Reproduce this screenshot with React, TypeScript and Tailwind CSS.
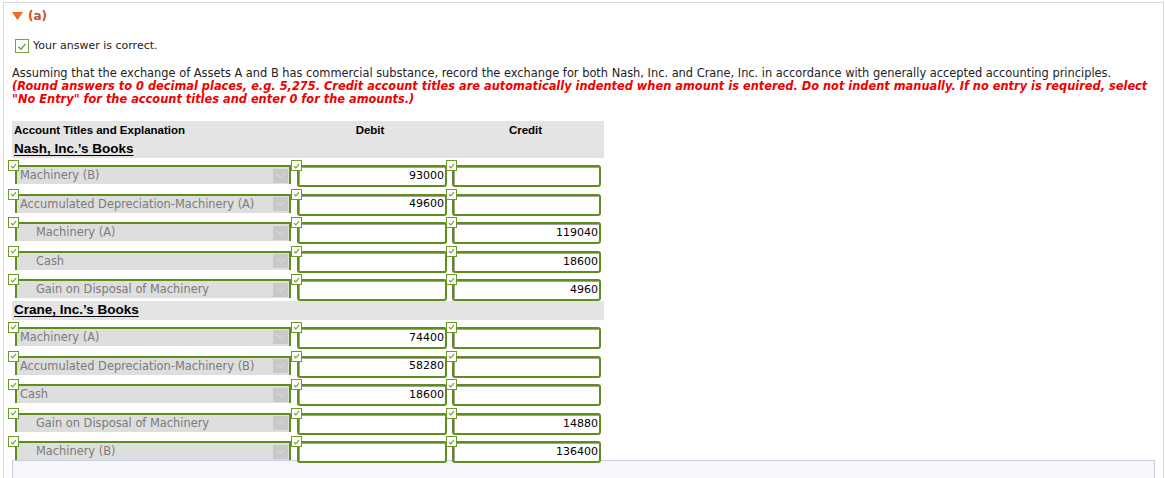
import React from 'react';

type Row = { title: string; indent: boolean; debit: string; credit: string };

const nash: Row[] = [
  { title: 'Machinery (B)', indent: false, debit: '93000', credit: '' },
  { title: 'Accumulated Depreciation-Machinery (A)', indent: false, debit: '49600', credit: '' },
  { title: 'Machinery (A)', indent: true, debit: '', credit: '119040' },
  { title: 'Cash', indent: true, debit: '', credit: '18600' },
  { title: 'Gain on Disposal of Machinery', indent: true, debit: '', credit: '4960' },
];

const crane: Row[] = [
  { title: 'Machinery (A)', indent: false, debit: '74400', credit: '' },
  { title: 'Accumulated Depreciation-Machinery (B)', indent: false, debit: '58280', credit: '' },
  { title: 'Cash', indent: false, debit: '18600', credit: '' },
  { title: 'Gain on Disposal of Machinery', indent: true, debit: '', credit: '14880' },
  { title: 'Machinery (B)', indent: true, debit: '', credit: '136400' },
];

const SmallCheck: React.FC<{ pos: string }> = ({ pos }) => (
  <span
    className={`absolute top-[2px] z-10 flex h-[11px] w-[11px] items-center justify-center border border-[#6b9a2b] bg-white ${pos}`}
  >
    <svg width="7" height="6" viewBox="0 0 7 6">
      <path d="M1 3.2 L2.8 5 L6 1.2" fill="none" stroke="#6b9a2b" strokeWidth="1.1" />
    </svg>
  </span>
);

const Amount: React.FC<{ value: string; width: string }> = ({ value, width }) => (
  <div
    className={`flex h-[22px] items-center justify-end rounded-[3px] border-2 border-[#5f8f1b] bg-white pr-[1px] text-[11px] text-black shadow-[inset_1px_1px_0_#a0a0a0] ${width}`}
  >
    {value}
  </div>
);

const EntryRow: React.FC<{ row: Row }> = ({ row }) => (
  <div className="flex h-[28.6px]">
    <div className="relative w-[281px] pt-[7px]">
      <SmallCheck pos="left-[-4px]" />
      <div className="ml-[3px] flex h-[19px] w-[276px] items-center justify-between border-t-2 border-l-2 border-r-2 border-[#5f8f1b] bg-[#dedede]">
        <span className={`text-[11.4px] text-[#7b7b7b] ${row.indent ? 'pl-[19px]' : 'pl-[3px]'}`}>{row.title}</span>
        <span className="mr-[1px] flex h-[14px] w-[15px] items-center justify-center bg-[#c9c9c9]">
          <svg width="9" height="6" viewBox="0 0 9 6">
            <path d="M1 1 L4.5 4.5 L8 1" fill="none" stroke="#e2e2e2" strokeWidth="1" />
          </svg>
        </span>
      </div>
    </div>
    <div className="relative w-[154px] pt-[7px]">
      <SmallCheck pos="left-[-2px]" />
      <div className="ml-[4px]">
        <Amount value={row.debit} width="w-[150px]" />
      </div>
    </div>
    <div className="relative w-[157px] pt-[7px]">
      <SmallCheck pos="left-[-1px]" />
      <div className="ml-[5px]">
        <Amount value={row.credit} width="w-[149px]" />
      </div>
    </div>
  </div>
);

const SectionTitle: React.FC<{ text: string; h: string }> = ({ text, h }) => (
  <div className={`flex items-center bg-[#e4e4e4] pl-[2px] ${h}`}>
    <span className="font-['Liberation_Sans',sans-serif] text-[13.5px] font-bold text-black underline underline-offset-2">
      {text}
    </span>
  </div>
);

export default function App() {
  return (
    <div className="h-[478px] w-[1165px] overflow-hidden bg-white pt-[2px] font-['DejaVu_Sans',Verdana,sans-serif] text-[#222]">
      <div className="ml-[3px] mr-[1px] h-[476px] border-l border-r border-t border-[#d3d9e1] pl-[8px] pt-[6px]">
        {/* part heading */}
        <div className="flex h-[14px] items-center gap-[5px]">
          <svg width="11" height="8" viewBox="0 0 11 8">
            <path d="M0 0 L11 0 L5.5 8 Z" fill="#ee6a1f" />
          </svg>
          <span className="text-[12px] font-bold text-[#c9521c]">(a)</span>
        </div>

        {/* feedback */}
        <div className="mt-[16px] flex h-[14px] items-center gap-[4px] pl-[3px]">
          <span className="flex h-[14px] w-[14px] items-center justify-center border border-[#7aa23c] bg-white">
            <svg width="10" height="9" viewBox="0 0 10 9">
              <path d="M1.5 4.8 L4 7.2 L8.5 1.8" fill="none" stroke="#6b9a2b" strokeWidth="1.3" />
            </svg>
          </span>
          <span className="text-[11px] text-[#222]">Your answer is correct.</span>
        </div>

        {/* instructions */}
        <div className="mt-[14px] leading-[13px]">
          <p className="text-[11.4px]">
            Assuming that the exchange of Assets A and B has commercial substance, record the exchange for both Nash, Inc.
            and Crane, Inc. in accordance with generally accepted accounting principles.
          </p>
          <p className="text-[11.4px] font-bold italic text-[#f00000]">
            (Round answers to 0 decimal places, e.g. 5,275. Credit account titles are automatically indented when amount is
            entered. Do not indent manually. If no entry is required, select "No Entry" for the account titles and enter 0
            for the amounts.)
          </p>
        </div>

        {/* journal table */}
        <div className="mt-[15px] w-[592px]">
          <div className="flex h-[20px] items-center bg-[#e4e4e4] font-['Liberation_Sans',sans-serif] text-[11.5px] font-bold text-black">
            <span className="w-[281px] pl-[2px]">Account Titles and Explanation</span>
            <span className="w-[154px] text-center">Debit</span>
            <span className="w-[157px] text-center">Credit</span>
          </div>
          <SectionTitle text="Nash, Inc.’s Books" h="h-[17px]" />
          {nash.map((r, i) => (
            <EntryRow key={`n${i}`} row={r} />
          ))}
          <SectionTitle text="Crane, Inc.’s Books" h="h-[19px]" />
          {crane.map((r, i) => (
            <EntryRow key={`c${i}`} row={r} />
          ))}
        </div>

        <div className="-mt-[3px] h-[40px] w-[1143px] border border-[#c5d0dc] bg-[#f5f7fa]" />
      </div>
    </div>
  );
}
